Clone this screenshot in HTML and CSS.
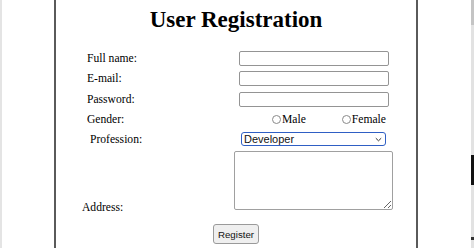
FILE: index.html
```html
<!DOCTYPE html>
<html>
<head>
<meta charset="utf-8">
<link rel="stylesheet" href="styles.css">
</head>
<body>
<div class="page">
  <div class="edge-left"></div>
  <div class="card">
    <h1>User Registration</h1>
    <form class="form">
      <label class="lbl">Full name:</label>
      <div class="ctl"><input class="field" type="text"></div>
      <label class="lbl">E-mail:</label>
      <div class="ctl"><input class="field" type="text"></div>
      <label class="lbl">Password:</label>
      <div class="ctl"><input class="field" type="password"></div>
      <label class="lbl">Gender:</label>
      <div class="ctl radios">
        <label class="radio"><input type="radio" name="g">Male</label>
        <label class="radio"><input type="radio" name="g">Female</label>
      </div>
      <label class="lbl lbl-prof">Profession:</label>
      <div class="ctl">
        <div class="select-wrap">
          <select class="select"><option>Developer</option></select>
          <svg class="chev" width="7" height="5" viewBox="0 0 7 5"><path d="M0.8 1.2 L3.5 3.8 L6.2 1.2" fill="none" stroke="#333" stroke-width="1"/></svg>
        </div>
      </div>
      <label class="lbl lbl-addr">Address:</label>
      <div class="ctl"><textarea class="area"></textarea></div>
    </form>
    <div class="actions"><button class="btn" type="button">Register</button></div>
  </div>
  <div class="edge-right">
    <div class="thumb"></div>
    <div class="mark1"></div>
    <div class="mark2"></div>
  </div>
</div>
</body>
</html>
```
FILE: styles.css
```css
html, body {
  margin: 0;
  padding: 0;
  background: #fff;
}
body {
  font-family: "Liberation Serif", "Times New Roman", serif;
  font-size: 11.6px;
  color: #000;
}
.page {
  width: 474px;
  height: 248px;
  overflow: hidden;
  display: flex;
}
.edge-left {
  width: 2px;
  background: #e4e4e4;
  flex: none;
}
.card {
  margin-left: 52px;
  width: 360px;
  flex: none;
  border-left: 2px solid #5a5a5a;
  border-right: 2px solid #5a5a5a;
  padding-top: 7px;
}
h1 {
  margin: 0;
  font-size: 23px;
  line-height: 26px;
  font-weight: bold;
  text-align: center;
  color: #000;
}
.form {
  display: grid;
  grid-template-columns: 147px 159px;
  grid-template-rows: 15px 15px 15px 15px 14px 59px;
  row-gap: 5.25px;
  padding-left: 31px;
  margin-top: 18px;
}
.lbl {
  align-self: center;
  line-height: 13px;
}
.lbl-prof {
  padding-left: 3px;
}
.lbl-addr {
  align-self: end;
  margin-left: -5px;
  margin-bottom: -4px;
}
.ctl {
  display: flex;
  justify-content: center;
  align-items: center;
}
.field {
  width: 150px;
  height: 15px;
  box-sizing: border-box;
  border: 1px solid #949494;
  border-radius: 2px;
  margin: 0;
  padding: 0 2px;
  background: #fff;
}
.radios {
  justify-content: flex-start;
  padding-left: 38px;
  gap: 36px;
}
.radio {
  display: flex;
  align-items: center;
  line-height: 13px;
}
.radio input {
  appearance: none;
  -webkit-appearance: none;
  width: 9px;
  height: 9px;
  margin: 0 1px 0 0;
  border: 1px solid #8a8a8a;
  border-radius: 50%;
  box-sizing: border-box;
  background: #fff;
}
.select-wrap {
  position: relative;
  width: 145px;
  height: 14px;
}
.select {
  appearance: none;
  -webkit-appearance: none;
  width: 145px;
  height: 14px;
  box-sizing: border-box;
  margin: 0;
  padding: 0 0 0 2px;
  border: 1.5px solid #2f5fc4;
  border-radius: 3px;
  background: #fff;
  font-family: "Liberation Sans", Arial, sans-serif;
  font-size: 11px;
  line-height: 11px;
  color: #111;
  outline: none;
}
.chev {
  position: absolute;
  right: 4px;
  top: 5px;
}
.area {
  width: 159px;
  height: 59px;
  box-sizing: border-box;
  margin: 0;
  border: 1px solid #a0a0a0;
  border-radius: 2px;
  padding: 2px;
  background: #fff;
}
.actions {
  display: flex;
  justify-content: center;
  margin-top: 13.75px;
}
.btn {
  width: 46px;
  height: 20px;
  box-sizing: border-box;
  margin: 0;
  padding: 0;
  border: 1px solid #9a9a9a;
  border-radius: 3px;
  background: #efefef;
  font-family: "Liberation Sans", Arial, sans-serif;
  font-size: 9.7px;
  color: #111;
}
.edge-right {
  margin-left: 53px;
  width: 3px;
  flex: none;
  background: #e2e2e2;
  display: flex;
  flex-direction: column;
}
.thumb {
  height: 25px;
  background: #c4c4c4;
}
.mark1 {
  margin-top: 130px;
  height: 30px;
  background: #111;
}
.mark2 {
  margin-top: 52px;
  height: 3px;
  background: #333;
}
```
